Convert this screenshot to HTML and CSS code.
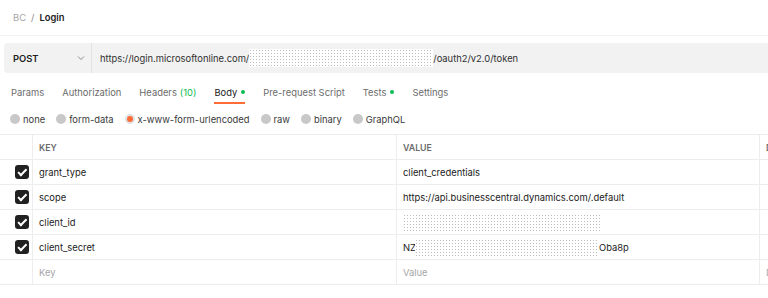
FILE: index.html
```html
<!DOCTYPE html>
<html>
  <head>
    <title>BC / Login</title>
    <link rel="stylesheet" href="styles.css">
  </head>
  <body>
    <div class="crumbs">
      <span class="crumb-parent">BC</span>
      <span class="crumb-sep">/</span>
      <span class="crumb-current">Login</span>
    </div>

    <div class="url-bar">
      <div class="method">
        <span>POST</span>
        <svg class="chevron" width="10" height="10" viewBox="0 0 10 10">
          <path d="M2 3.5 L5 6.5 L8 3.5" fill="none" stroke="#8a8a8a" stroke-width="1"/>
        </svg>
      </div>
      <div class="url">
        <span>https://login.microsoftonline.com/</span><span class="redacted url-redacted"></span><span>/oauth2/v2.0/token</span>
      </div>
    </div>

    <div class="tabs">
      <span class="tab">Params</span>
      <span class="tab">Authorization</span>
      <span class="tab">Headers <span class="count">(10)</span></span>
      <span class="tab active">Body <i class="dot"></i></span>
      <span class="tab">Pre-request Script</span>
      <span class="tab">Tests <i class="dot"></i></span>
      <span class="tab">Settings</span>
    </div>

    <div class="body-types">
      <label class="radio"><i class="circle"></i>none</label>
      <label class="radio"><i class="circle"></i>form-data</label>
      <label class="radio"><i class="circle checked"></i>x-www-form-urlencoded</label>
      <label class="radio"><i class="circle"></i>raw</label>
      <label class="radio"><i class="circle"></i>binary</label>
      <label class="radio"><i class="circle"></i>GraphQL</label>
    </div>

    <div class="params">
      <div class="row head">
        <div class="cell check"></div>
        <div class="cell key">KEY</div>
        <div class="cell value">VALUE</div>
        <div class="cell desc">D</div>
      </div>
      <div class="row">
        <div class="cell check"><span class="box"></span></div>
        <div class="cell key">grant_type</div>
        <div class="cell value">client_credentials</div>
        <div class="cell desc"></div>
      </div>
      <div class="row">
        <div class="cell check"><span class="box"></span></div>
        <div class="cell key">scope</div>
        <div class="cell value">https://api.businesscentral.dynamics.com/.default</div>
        <div class="cell desc"></div>
      </div>
      <div class="row">
        <div class="cell check"><span class="box"></span></div>
        <div class="cell key">client_id</div>
        <div class="cell value"><span class="redacted id-redacted"></span></div>
        <div class="cell desc"></div>
      </div>
      <div class="row">
        <div class="cell check"><span class="box"></span></div>
        <div class="cell key">client_secret</div>
        <div class="cell value">NZ<span class="redacted secret-redacted"></span>Oba8p</div>
        <div class="cell desc"></div>
      </div>
      <div class="row empty">
        <div class="cell check"></div>
        <div class="cell key">Key</div>
        <div class="cell value">Value</div>
        <div class="cell desc">D</div>
      </div>
    </div>
  </body>
</html>
```

FILE: styles.css
```css
body {
  margin: 0;
  background: #ffffff;
  font-family: Inter, "Noto Sans", sans-serif;
  font-size: 9.4px;
  color: #212121;
  overflow: hidden;
}

.crumbs {
  height: 35px;
  display: flex;
  align-items: center;
  padding-left: 13px;
  border-bottom: 1px solid #f2f2f2;
}
.crumb-parent {
  color: #a6a6a6;
}
.crumb-sep {
  color: #8a8a8a;
  margin: 0 5px;
}
.crumb-current {
  font-weight: 600;
}

.url-bar {
  display: flex;
  height: 30px;
  margin: 7px 0 0 4px;
  width: 780px;
  background: #f2f2f2;
  border-radius: 4px;
}
.method {
  width: 73px;
  padding: 0 5px 0 9px;
  display: flex;
  align-items: center;
  justify-content: space-between;
  border-right: 1px solid #e3e3e3;
  font-weight: 600;
}
.url {
  display: flex;
  align-items: center;
  padding-left: 8px;
  color: #303030;
}

.redacted {
  display: inline-block;
  background-color: #ffffff;
  background-image: radial-gradient(circle, #bdbdbd 0.8px, transparent 1px);
  background-size: 3px 3px;
}
.url-redacted {
  width: 184px;
  height: 18px;
}
.id-redacted {
  width: 198px;
  height: 17px;
}
.secret-redacted {
  width: 184px;
  height: 17px;
  margin-left: -1px;
}

.tabs {
  display: flex;
  height: 24px;
  align-items: center;
  padding-left: 11px;
  margin-top: 7px;
  color: #6b6b6b;
}
.tab {
  position: relative;
  margin-right: 18px;
  height: 24px;
  display: flex;
  align-items: center;
}
.tab .count {
  color: #0cbb52;
  margin-left: 3px;
}
.tab.active {
  color: #212121;
}
.tab.active::after {
  content: "";
  position: absolute;
  left: 0;
  right: 0;
  bottom: 0;
  height: 2px;
  background: #ff6c37;
}
.dot {
  width: 4px;
  height: 4px;
  border-radius: 50%;
  background: #0cbb52;
  margin-left: 4px;
}

.body-types {
  display: flex;
  align-items: center;
  height: 30px;
  padding-left: 10px;
  color: #3a3a3a;
  border-bottom: 1px solid #ededed;
}
.radio {
  display: flex;
  align-items: center;
  margin-right: 11px;
}
.circle {
  width: 10px;
  height: 10px;
  border-radius: 50%;
  background: #c8c8c8;
  margin-right: 3px;
  box-sizing: border-box;
}
.circle.checked {
  background: #ff6c37;
  border: 2px solid #e0e0e0;
}

.params {
  width: 800px;
}
.row {
  display: flex;
  height: 25px;
  box-sizing: border-box;
  border-bottom: 1px solid #ededed;
}
.row.head {
  font-weight: 600;
  color: #6b6b6b;
  font-size: 8.8px;
}
.cell {
  display: flex;
  align-items: center;
  flex-shrink: 0;
  padding-left: 6px;
  border-right: 1px solid #ededed;
  box-sizing: border-box;
  overflow: hidden;
}
.cell.check {
  width: 33px;
  justify-content: flex-end;
  padding-left: 0;
  padding-right: 3px;
}
.cell.key {
  width: 364px;
}
.cell.value {
  width: 363px;
}
.cell.desc {
  flex: 1;
}
.row.empty {
  color: #a6a6a6;
}
.box {
  width: 14px;
  height: 14px;
  border-radius: 3px;
  background: #212121;
  position: relative;
}
.box::after {
  content: "";
  position: absolute;
  left: 4.5px;
  top: 2px;
  width: 3px;
  height: 6.5px;
  border: solid #ffffff;
  border-width: 0 2px 2px 0;
  transform: rotate(45deg);
}
```
